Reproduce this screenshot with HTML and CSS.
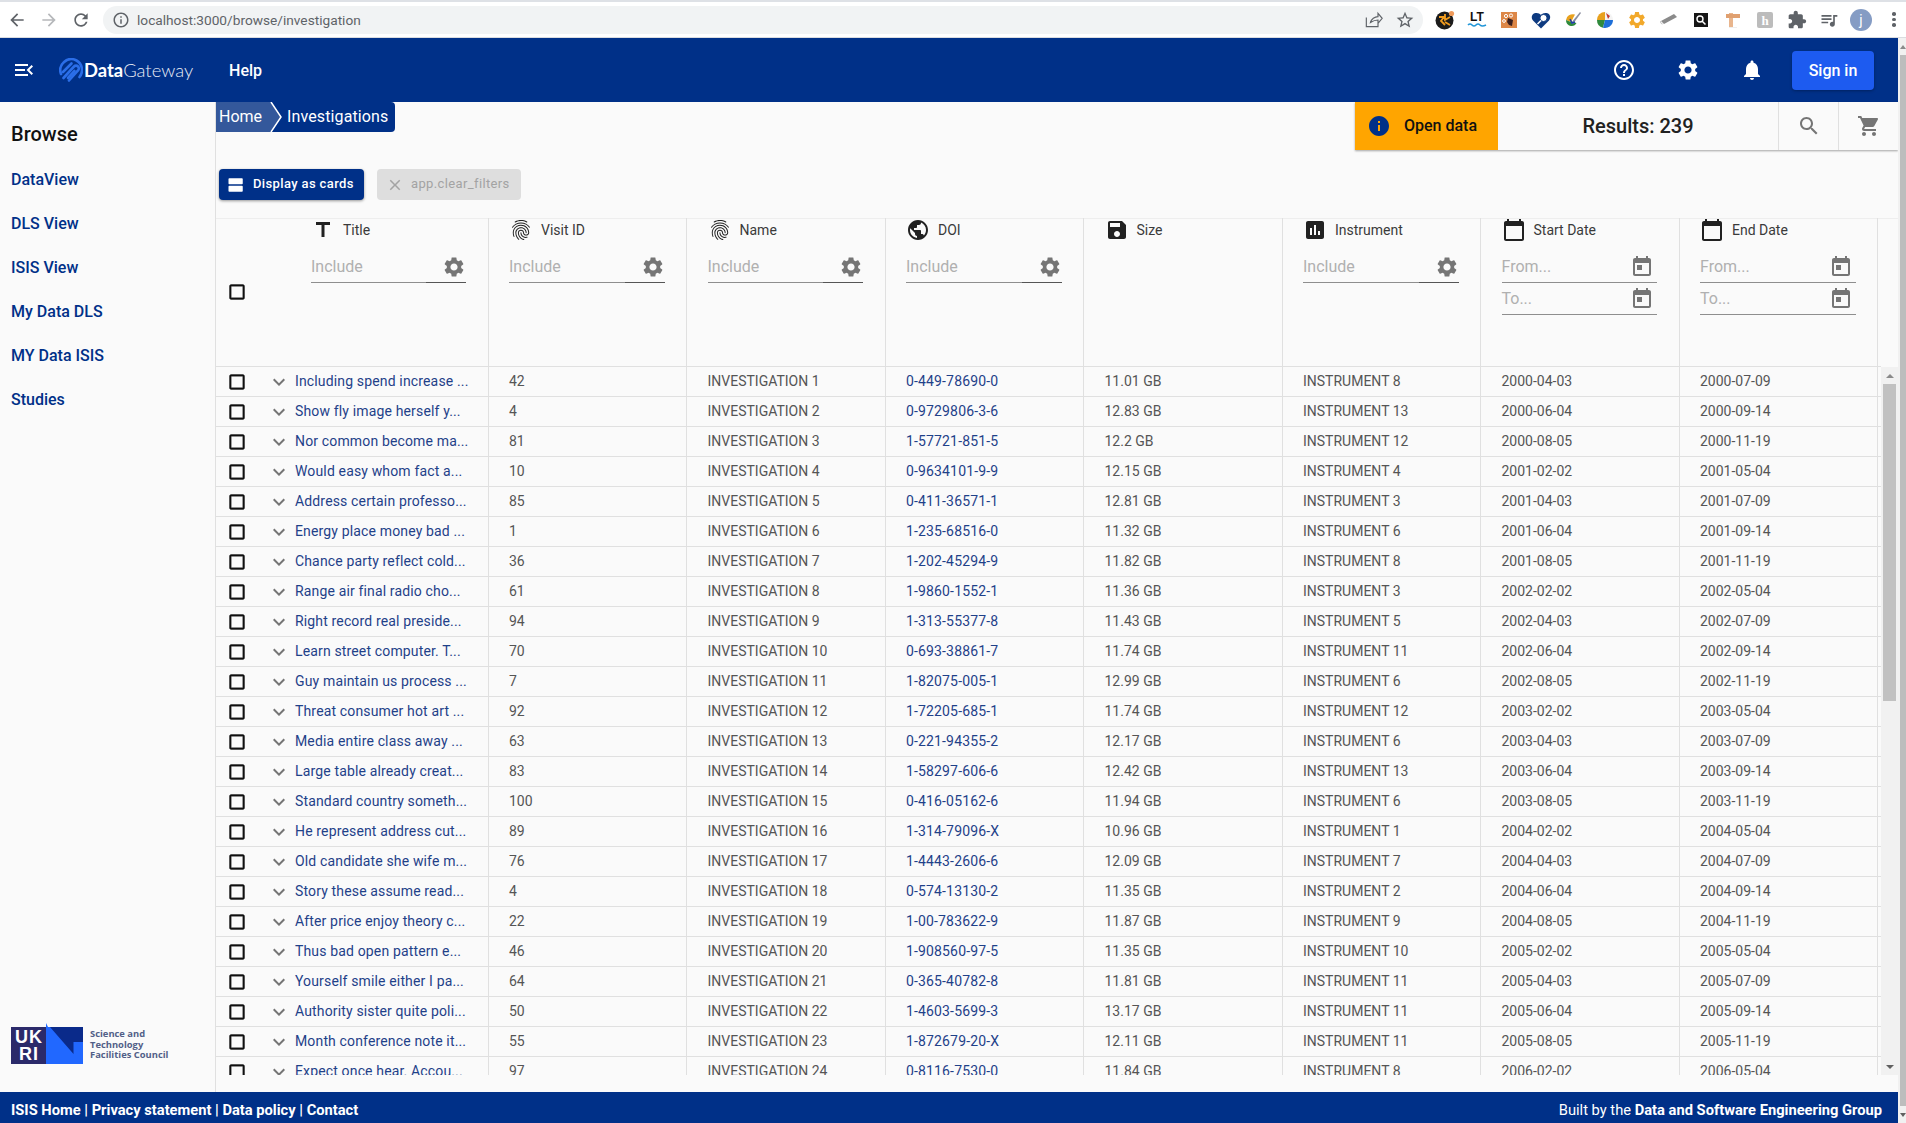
FILE: index.html
```html
<!DOCTYPE html>
<html lang="en">
<head>
<meta charset="utf-8">
<title>DataGateway - Investigations</title>
<link rel="stylesheet" href="styles.css">
</head>
<body>
<svg class="sprite" aria-hidden="true">
<defs>
<symbol id="i-menu" viewBox="0 0 24 24"><path d="M3 18h13v-2H3v2zm0-5h10v-2H3v2zm0-7v2h13V6H3zm18 9.59L17.42 12 21 8.41 19.59 7l-5 5 5 5L21 15.59z"/></symbol>
<symbol id="i-help" viewBox="0 0 24 24"><path d="M11 18h2v-2h-2v2zm1-16C6.48 2 2 6.48 2 12s4.48 10 10 10 10-4.48 10-10S17.52 2 12 2zm0 18c-4.41 0-8-3.59-8-8s3.59-8 8-8 8 3.59 8 8-3.59 8-8 8zm0-14c-2.21 0-4 1.79-4 4h2c0-1.1.9-2 2-2s2 .9 2 2c0 2-3 1.75-3 5h2c0-2.25 3-2.5 3-5 0-2.21-1.79-4-4-4z"/></symbol>
<symbol id="i-gear" viewBox="0 0 24 24"><path d="M19.14 12.94c.04-.3.06-.61.06-.94 0-.32-.02-.64-.07-.94l2.03-1.58c.18-.14.23-.41.12-.61l-1.92-3.32c-.12-.22-.37-.29-.59-.22l-2.39.96c-.5-.38-1.03-.7-1.62-.94l-.36-2.54c-.04-.24-.24-.41-.48-.41h-3.84c-.24 0-.43.17-.47.41l-.36 2.54c-.59.24-1.13.57-1.62.94l-2.39-.96c-.22-.08-.47 0-.59.22L2.74 8.87c-.12.21-.08.47.12.61l2.03 1.58c-.05.3-.09.63-.09.94s.02.64.07.94l-2.03 1.58c-.18.14-.23.41-.12.61l1.92 3.32c.12.22.37.29.59.22l2.39-.96c.5.38 1.03.7 1.62.94l.36 2.54c.05.24.24.41.48.41h3.84c.24 0 .44-.17.47-.41l.36-2.54c.59-.24 1.13-.56 1.62-.94l2.39.96c.22.08.47 0 .59-.22l1.92-3.32c.12-.22.07-.47-.12-.61l-2.01-1.58zM12 15.6c-1.98 0-3.6-1.62-3.6-3.6s1.62-3.6 3.6-3.6 3.6 1.62 3.6 3.6-1.62 3.6-3.6 3.6z"/></symbol>
<symbol id="i-bell" viewBox="0 0 24 24"><path d="M12 22c1.1 0 2-.9 2-2h-4c0 1.1.89 2 2 2zm6-6v-5c0-3.07-1.64-5.64-4.5-6.32V4c0-.83-.67-1.5-1.5-1.5s-1.5.67-1.5 1.5v.68C7.63 5.36 6 7.92 6 11v5l-2 2v1h16v-1l-2-2z"/></symbol>
<symbol id="i-search" viewBox="0 0 24 24"><path d="M15.5 14h-.79l-.28-.27C15.41 12.59 16 11.11 16 9.5 16 5.91 13.09 3 9.5 3S3 5.91 3 9.5 5.91 16 9.5 16c1.61 0 3.09-.59 4.23-1.57l.27.28v.79l5 4.99L20.49 19l-4.99-5zm-6 0C7.01 14 5 11.99 5 9.5S7.01 5 9.5 5 14 7.01 14 9.5 11.99 14 9.5 14z"/></symbol>
<symbol id="i-cart" viewBox="0 0 24 24"><path d="M7 18c-1.1 0-1.99.9-1.99 2S5.9 22 7 22s2-.9 2-2-.9-2-2-2zM1 2v2h2l3.6 7.59-1.35 2.45c-.16.28-.25.61-.25.96 0 1.1.9 2 2 2h12v-2H7.42c-.14 0-.25-.11-.25-.25l.03-.12.9-1.63h7.45c.75 0 1.41-.41 1.75-1.03l3.58-6.49c.08-.14.12-.31.12-.48 0-.55-.45-1-1-1H5.21l-.94-2H1zm16 16c-1.1 0-1.99.9-1.99 2s.89 2 1.99 2 2-.9 2-2-.9-2-2-2z"/></symbol>
<symbol id="i-info" viewBox="0 0 24 24"><path d="M12 2C6.48 2 2 6.48 2 12s4.48 10 10 10 10-4.48 10-10S17.52 2 12 2zm1 15h-2v-6h2v6zm0-8h-2V7h2v2z"/></symbol>
<symbol id="i-agenda" viewBox="0 0 24 24"><path d="M20 13H3c-.55 0-1 .45-1 1v6c0 .55.45 1 1 1h17c.55 0 1-.45 1-1v-6c0-.55-.45-1-1-1zm0-10H3c-.55 0-1 .45-1 1v6c0 .55.45 1 1 1h17c.55 0 1-.45 1-1V4c0-.55-.45-1-1-1z"/></symbol>
<symbol id="i-clear" viewBox="0 0 24 24"><path d="M19 6.41L17.59 5 12 10.59 6.41 5 5 6.41 10.59 12 5 17.59 6.41 19 12 13.41 17.59 19 19 17.59 13.41 12z"/></symbol>
<symbol id="i-title" viewBox="0 0 24 24"><path d="M5 4v3h5.5v12h3V7H19V4z"/></symbol>
<symbol id="i-finger" viewBox="0 0 24 24"><path d="M17.81 4.47c-.08 0-.16-.02-.23-.06C15.66 3.42 14 3 12.01 3c-1.98 0-3.86.47-5.57 1.41-.24.13-.54.04-.68-.2-.13-.24-.04-.55.2-.68C7.82 2.52 9.86 2 12.01 2c2.13 0 3.99.47 6.03 1.52.25.13.34.43.21.67-.09.18-.26.28-.44.28zM3.5 9.72c-.1 0-.2-.03-.29-.09-.23-.16-.28-.47-.12-.7.99-1.4 2.25-2.5 3.75-3.27C9.98 4.04 14 4.03 17.15 5.65c1.5.77 2.76 1.86 3.75 3.25.16.22.11.54-.12.7-.23.16-.54.11-.7-.12-.9-1.26-2.04-2.25-3.39-2.94-2.87-1.47-6.54-1.47-9.4.01-1.36.7-2.5 1.7-3.4 2.96-.08.14-.23.21-.39.21zm6.25 12.07c-.13 0-.26-.05-.35-.15-.87-.87-1.34-1.43-2.01-2.64-.69-1.23-1.05-2.73-1.05-4.34 0-2.97 2.54-5.39 5.66-5.39s5.66 2.42 5.66 5.39c0 .28-.22.5-.5.5s-.5-.22-.5-.5c0-2.42-2.09-4.39-4.66-4.39-2.57 0-4.66 1.97-4.66 4.39 0 1.44.32 2.77.93 3.85.64 1.15 1.08 1.64 1.85 2.42.19.2.19.51 0 .71-.11.1-.24.15-.37.15zm7.17-1.85c-1.19 0-2.24-.3-3.1-.89-1.49-1.01-2.38-2.65-2.38-4.39 0-.28.22-.5.5-.5s.5.22.5.5c0 1.41.72 2.74 1.94 3.56.71.48 1.54.71 2.54.71.24 0 .64-.03 1.04-.1.27-.05.53.13.58.41.05.27-.13.53-.41.58-.57.11-1.07.12-1.21.12zM14.91 22c-.04 0-.09-.01-.13-.02-1.59-.44-2.63-1.03-3.72-2.1-1.4-1.39-2.17-3.24-2.17-5.22 0-1.62 1.38-2.94 3.08-2.94 1.7 0 3.08 1.32 3.08 2.94 0 1.07.93 1.94 2.08 1.94s2.08-.87 2.08-1.94c0-3.77-3.25-6.83-7.25-6.83-2.84 0-5.44 1.58-6.61 4.03-.39.81-.59 1.76-.59 2.8 0 .78.07 2.01.67 3.61.1.26-.03.55-.29.64-.26.1-.55-.04-.64-.29-.49-1.31-.73-2.61-.73-3.96 0-1.2.23-2.29.68-3.24 1.33-2.79 4.28-4.6 7.51-4.6 4.55 0 8.25 3.51 8.25 7.83 0 1.62-1.38 2.94-3.08 2.94s-3.08-1.32-3.08-2.94c0-1.07-.93-1.94-2.08-1.94s-2.08.87-2.08 1.94c0 1.71.66 3.31 1.87 4.51.95.94 1.86 1.46 3.27 1.85.27.07.42.35.35.61-.05.23-.26.38-.47.38z"/></symbol>
<symbol id="i-public" viewBox="0 0 24 24"><path d="M12 2C6.48 2 2 6.48 2 12s4.48 10 10 10 10-4.48 10-10S17.52 2 12 2zm-1 17.93c-3.95-.49-7-3.85-7-7.93 0-.62.08-1.21.21-1.79L9 15v1c0 1.1.9 2 2 2v1.93zm6.9-2.54c-.26-.81-1-1.39-1.9-1.39h-1v-3c0-.55-.45-1-1-1H8v-2h2c.55 0 1-.45 1-1V7h2c1.1 0 2-.9 2-2v-.41c2.93 1.19 5 4.06 5 7.41 0 2.08-.8 3.97-2.1 5.39z"/></symbol>
<symbol id="i-save" viewBox="0 0 24 24"><path d="M17 3H5c-1.11 0-2 .9-2 2v14c0 1.1.89 2 2 2h14c1.1 0 2-.9 2-2V7l-4-4zm-5 16c-1.66 0-3-1.34-3-3s1.34-3 3-3 3 1.34 3 3-1.34 3-3 3zm3-10H5V5h10v4z"/></symbol>
<symbol id="i-assess" viewBox="0 0 24 24"><path d="M19 3H5c-1.1 0-2 .9-2 2v14c0 1.1.9 2 2 2h14c1.1 0 2-.9 2-2V5c0-1.1-.9-2-2-2zM9 17H7v-7h2v7zm4 0h-2V7h2v10zm4 0h-2v-4h2v4z"/></symbol>
<symbol id="i-today" viewBox="0 0 24 24"><path d="M19 3h-1V1h-2v2H8V1H6v2H5c-1.11 0-1.99.9-1.99 2L3 19c0 1.1.89 2 2 2h14c1.1 0 2-.9 2-2V5c0-1.1-.9-2-2-2zm0 16H5V8h14v11zM7 10h5v5H7z"/></symbol>
<symbol id="i-cal" viewBox="0 0 24 24"><path d="M20 3h-1V1h-2v2H7V1H5v2H4c-1.1 0-2 .9-2 2v16c0 1.1.9 2 2 2h16c1.1 0 2-.9 2-2V5c0-1.1-.9-2-2-2zm0 18H4V8h16v13z"/></symbol>
<symbol id="i-chev" viewBox="0 0 24 24"><path d="M16.59 8.59L12 13.17 7.41 8.59 6 10l6 6 6-6z"/></symbol>
<symbol id="i-box" viewBox="0 0 24 24"><path d="M19 5v14H5V5h14m0-2H5c-1.1 0-2 .9-2 2v14c0 1.1.9 2 2 2h14c1.1 0 2-.9 2-2V5c0-1.1-.9-2-2-2z"/></symbol>
<symbol id="i-back" viewBox="0 0 24 24"><path d="M20 11H7.83l5.59-5.59L12 4l-8 8 8 8 1.41-1.41L7.83 13H20v-2z"/></symbol>
<symbol id="i-fwd" viewBox="0 0 24 24"><path d="M12 4l-1.41 1.41L16.17 11H4v2h12.17l-5.58 5.59L12 20l8-8z"/></symbol>
<symbol id="i-reload" viewBox="0 0 24 24"><path d="M17.65 6.35C16.2 4.9 14.21 4 12 4c-4.42 0-7.99 3.58-7.99 8s3.57 8 7.99 8c3.73 0 6.84-2.55 7.73-6h-2.08c-.82 2.33-3.04 4-5.65 4-3.31 0-6-2.69-6-6s2.69-6 6-6c1.66 0 3.14.69 4.22 1.78L13 11h7V4l-2.35 2.35z"/></symbol>
<symbol id="i-infoline" viewBox="0 0 24 24"><path d="M11 7h2v2h-2zm0 4h2v6h-2zm1-9C6.48 2 2 6.48 2 12s4.48 10 10 10 10-4.48 10-10S17.52 2 12 2zm0 18c-4.41 0-8-3.59-8-8s3.59-8 8-8 8 3.59 8 8-3.59 8-8 8z"/></symbol>
<symbol id="i-star" viewBox="0 0 24 24"><path d="M22 9.24l-7.19-.62L12 2 9.19 8.63 2 9.24l5.46 4.73L5.82 21 12 17.27 18.18 21l-1.63-7.03L22 9.24zM12 15.4l-3.76 2.27 1-4.28-3.32-2.88 4.38-.38L12 6.1l1.71 4.04 4.38.38-3.32 2.88 1 4.28L12 15.4z"/></symbol>
<symbol id="i-share" viewBox="0 0 24 24"><path d="M4 9v11h14v-5M9 15c1-4 5-7 9-7V4l5 6-5 6v-4c-3 0-6 1-9 3z" fill="none" stroke="currentColor" stroke-width="1.4"/></symbol>
<symbol id="i-ext" viewBox="0 0 24 24"><path d="M20.5 11H19V7c0-1.1-.9-2-2-2h-4V3.5C13 2.12 11.88 1 10.5 1S8 2.12 8 3.5V5H4c-1.1 0-1.99.9-1.99 2v3.8H3.5c1.49 0 2.7 1.21 2.7 2.7s-1.21 2.7-2.7 2.7H2V20c0 1.1.9 2 2 2h3.8v-1.5c0-1.49 1.21-2.7 2.7-2.7 1.49 0 2.7 1.21 2.7 2.7V22H17c1.1 0 2-.9 2-2v-4h1.5c1.38 0 2.5-1.12 2.5-2.5S21.88 11 20.5 11z"/></symbol>
<symbol id="i-queue" viewBox="0 0 24 24"><path d="M15 6H3v2h12V6zm0 4H3v2h12v-2zM3 16h8v-2H3v2zM17 6v8.18c-.31-.11-.65-.18-1-.18-1.66 0-3 1.34-3 3s1.34 3 3 3 3-1.34 3-3V8h3V6h-5z"/></symbol>
</defs>
</svg>

<header class="chrome">
  <span class="slot"><svg class="ic ic-20 c-nav"><use href="#i-back"/></svg></span>
  <span class="slot"><svg class="ic ic-20 c-off"><use href="#i-fwd"/></svg></span>
  <span class="slot"><svg class="ic ic-20 c-nav"><use href="#i-reload"/></svg></span>
  <div class="omnibox">
    <svg class="ic ic-18 c-nav"><use href="#i-infoline"/></svg>
    <span class="url">localhost:3000/browse/investigation</span>
    <span class="omni-right">
      <svg class="ic ic-20 c-nav"><use href="#i-share"/></svg>
      <svg class="ic ic-20 c-nav"><use href="#i-star"/></svg>
    </span>
  </div>
  <div class="exts">
    <span class="slot"><svg class="ic ic-20" viewBox="0 0 20 20"><circle cx="9.5" cy="10.5" r="9" fill="#1c1c1c"/><path d="M4 7h5l-3 4 4 4M10 4v6l5-3M10 12l5 3" fill="none" stroke="#f29d1f" stroke-width="1.8"/><circle cx="16.5" cy="3.5" r="2.6" fill="#ef9a5a"/></svg></span>
    <span class="slot"><svg class="ic ic-20" viewBox="0 0 20 20"><text x="10" y="11" class="ext-lt">LT</text><path d="M1 15q2-2 4 0t4 0 4 0 6 0" fill="none" stroke="#2196d8" stroke-width="1.6"/></svg></span>
    <span class="slot"><svg class="ic ic-20" viewBox="0 0 20 20"><rect width="16" height="16" x="2" y="2" fill="#dd8747"/><circle cx="7" cy="6" r="1.6" fill="none" stroke="#fff"/><circle cx="12" cy="5.5" r="1.6" fill="none" stroke="#fff"/><circle cx="5" cy="11" r="1.4" fill="none" stroke="#fff"/><path d="M9 8l5 2-1 6-3-1-2-3z" fill="#3a2020"/></svg></span>
    <span class="slot"><svg class="ic ic-20" viewBox="0 0 20 20"><path d="M10 18.5 2 10.5C0 8 .5 4.5 3.500 3.300 6 2.300 8.500 3.200 10 5c1.500-1.800 4-2.700 6.500-1.700 3 1.200 3.500 4.700 1.500 7.200z" fill="#0d3a80"/><circle cx="12.500" cy="8" r="3.600" fill="#fff" stroke="#0d3a80"/><path d="M10 10.500 6.500 14" stroke="#fff" stroke-width="1.600"/></svg></span>
    <span class="slot"><svg class="ic ic-20" viewBox="0 0 20 20"><path d="M3 10a7 6 0 0 1 9-5.500L8 12z" fill="#e8a11e"/><path d="M3 10c0 4 3 6 6 6 2 0 3.500-1 4.500-3L8 12z" fill="#2f8a3c"/><path d="M8 13 17 2l1 1-8 11z" fill="#8b8fa0"/><path d="M7 9l2 4 3-1" stroke="#1e3fa8" fill="none" stroke-width="1.500"/></svg></span>
    <span class="slot"><svg class="ic ic-20" viewBox="0 0 20 20"><path d="M10 10V2a8 8 0 0 0-8 8z" fill="#e8a11e"/><path d="M10 10H2a8 8 0 0 0 6 7.800z" fill="#2f8a3c"/><path d="M10 10l-2 7.800A8 8 0 0 0 18 10z" fill="#1e6fd8"/><path d="M10 10V2a8 8 0 0 1 8 8z" fill="#f4f4f4"/><path d="M11 3l4 3-2 3z" fill="#c23a30"/></svg></span>
    <span class="slot"><svg class="ic ic-20 c-gearext"><use href="#i-gear"/></svg></span>
    <span class="slot"><svg class="ic ic-20" viewBox="0 0 20 20"><path d="M2 11l13-7 3 3-13 7z" fill="#8a8a8a"/><path d="M2 11c-1 1 0 3 1.500 3" stroke="#bbb" fill="none"/></svg></span>
    <span class="slot"><svg class="ic ic-20" viewBox="0 0 20 20"><rect x="3" y="3" width="14" height="14" fill="#161616"/><circle cx="9" cy="9" r="3" fill="none" stroke="#fff" stroke-width="1.400"/><path d="M11 11l3.500 3.500" stroke="#fff" stroke-width="1.500"/></svg></span>
    <span class="slot"><svg class="ic ic-20" viewBox="0 0 20 20"><rect x="6" y="3" width="4" height="14" fill="#e8b58d"/><rect x="3" y="4" width="14" height="4" fill="#e0a070"/><path d="M6 17h8v1H6z" fill="#eee"/></svg></span>
    <span class="slot"><svg class="ic ic-20" viewBox="0 0 20 20"><rect x="2" y="2" width="16" height="16" rx="2" fill="#bcbcbc"/><text x="10" y="14.500" class="ext-h">h</text></svg></span>
    <span class="slot"><svg class="ic ic-20 c-ext"><use href="#i-ext"/></svg></span>
    <span class="slot"><svg class="ic ic-20 c-ext"><use href="#i-queue"/></svg></span>
    <span class="slot"><span class="avatar">j</span></span>
    <span class="slot more"><span class="dots"><i></i><i></i><i></i></span></span>
  </div>
</header>

<div class="workspace">
  <div class="app">
    <nav class="appbar">
      <svg class="ic ic-24 menu-ic"><use href="#i-menu"/></svg>
      <svg class="dg-mark" viewBox="0 0 24 24"><g fill="none" stroke="#2b6ee8" stroke-width="2.600" stroke-linecap="round"><path d="M2 16A11 11 0 0 1 17.500 2.500 11 11 0 0 1 20.500 19"/><path d="M4.500 20 15 8.500a2.800 2.800 0 0 1 4 4L10 22.500"/><path d="M4 14 12.500 5.500"/><path d="M9 20l6.500-7"/></g></svg>
      <span class="dg-word"><b>Data</b>Gateway</span>
      <span class="appbar-help">Help</span>
      <span class="appbar-right">
        <span class="appbar-icons">
          <svg class="ic ic-24 c-white"><use href="#i-help"/></svg>
          <svg class="ic ic-24 c-white"><use href="#i-gear"/></svg>
          <svg class="ic ic-24 c-white"><use href="#i-bell"/></svg>
        </span>
        <span class="signin">Sign in</span>
      </span>
    </nav>

    <div class="main">
      <aside class="sidebar">
        <div class="side-nav">
          <h2 class="side-title">Browse</h2>
          <a class="side-link">DataView</a>
          <a class="side-link">DLS View</a>
          <a class="side-link">ISIS View</a>
          <a class="side-link">My Data DLS</a>
          <a class="side-link">MY Data ISIS</a>
          <a class="side-link">Studies</a>
        </div>
        <div class="stfc">
          <svg class="ukri" viewBox="0 0 72 41">
            <rect x="0" y="4" width="36" height="37" fill="#2b2a6a"/>
            <path d="M35 0V41H72V4H37z" fill="#2168ff"/>
            <path d="M39 4H72V19H62.500V31z" fill="#0a2a8a"/>
            <text x="18" y="20" class="ukri-t">UK</text>
            <text x="18" y="37" class="ukri-t">RI</text>
          </svg>
          <span class="stfc-text">Science and<br>Technology<br>Facilities Council</span>
        </div>
      </aside>

      <section class="content">
        <div class="toprow">
          <div class="crumbs">
            <span class="crumb-home">Home</span>
            <svg class="crumb-sep" viewBox="0 0 14 30"><path d="M0 0H3L13 15 3 30H0z" fill="#34589b"/><path d="M3 0H14V30H3L13 15z" fill="#003088"/><path d="M3 0 13 15 3 30" fill="none" stroke="#fff" stroke-width="1.500"/></svg>
            <span class="crumb-last">Investigations</span>
          </div>
          <div class="resultbar">
            <div class="opendata"><svg class="ic ic-24 c-navy"><use href="#i-info"/></svg><span>Open data</span></div>
            <div class="results">Results: 239</div>
            <div class="rb-btn"><svg class="ic ic-24 c-grey"><use href="#i-search"/></svg></div>
            <div class="rb-btn"><svg class="ic ic-24 c-grey"><use href="#i-cart"/></svg></div>
          </div>
        </div>

        <div class="toolbar">
          <span class="btn btn-primary"><svg class="ic ic-18 c-white"><use href="#i-agenda"/></svg><span class="btn-label">Display as cards</span></span>
          <span class="btn btn-off"><svg class="ic ic-18 c-offbtn"><use href="#i-clear"/></svg><span class="btn-label">app.clear_filters</span></span>
        </div>

        <div class="table">
          <div class="head grid">
            <div class="hcell hcell-first">
              <span class="hsel"><svg class="ic ic-20 c-box"><use href="#i-box"/></svg></span>
              <div class="hbody">
                <div class="hlabel"><svg class="ic ic-24 c-dark"><use href="#i-title"/></svg>Title</div>
                <div class="filter"><span class="ph">Include</span><span class="fbtn"><svg class="ic ic-24 c-grey"><use href="#i-gear"/></svg></span></div>
              </div>
            </div>
            <div class="hcell">
              <div class="hlabel"><svg class="ic ic-24 c-dark"><use href="#i-finger"/></svg>Visit ID</div>
              <div class="filter"><span class="ph">Include</span><span class="fbtn"><svg class="ic ic-24 c-grey"><use href="#i-gear"/></svg></span></div>
            </div>
            <div class="hcell">
              <div class="hlabel"><svg class="ic ic-24 c-dark"><use href="#i-finger"/></svg>Name</div>
              <div class="filter"><span class="ph">Include</span><span class="fbtn"><svg class="ic ic-24 c-grey"><use href="#i-gear"/></svg></span></div>
            </div>
            <div class="hcell">
              <div class="hlabel"><svg class="ic ic-24 c-dark"><use href="#i-public"/></svg>DOI</div>
              <div class="filter"><span class="ph">Include</span><span class="fbtn"><svg class="ic ic-24 c-grey"><use href="#i-gear"/></svg></span></div>
            </div>
            <div class="hcell">
              <div class="hlabel"><svg class="ic ic-24 c-dark"><use href="#i-save"/></svg>Size</div>
            </div>
            <div class="hcell">
              <div class="hlabel"><svg class="ic ic-24 c-dark"><use href="#i-assess"/></svg>Instrument</div>
              <div class="filter"><span class="ph">Include</span><span class="fbtn"><svg class="ic ic-24 c-grey"><use href="#i-gear"/></svg></span></div>
            </div>
            <div class="hcell">
              <div class="hlabel"><svg class="ic ic-24 c-dark"><use href="#i-cal"/></svg>Start Date</div>
              <div class="filter filter-date"><span class="ph">From...</span><svg class="ic ic-24 c-grey"><use href="#i-today"/></svg></div>
              <div class="filter filter-date filter-next"><span class="ph">To...</span><svg class="ic ic-24 c-grey"><use href="#i-today"/></svg></div>
            </div>
            <div class="hcell">
              <div class="hlabel"><svg class="ic ic-24 c-dark"><use href="#i-cal"/></svg>End Date</div>
              <div class="filter filter-date"><span class="ph">From...</span><svg class="ic ic-24 c-grey"><use href="#i-today"/></svg></div>
              <div class="filter filter-date filter-next"><span class="ph">To...</span><svg class="ic ic-24 c-grey"><use href="#i-today"/></svg></div>
            </div>
          </div>

          <div class="tbody">
            <div class="rows">
              <div class="row grid"><div class="cell cell-first"><svg class="ic ic-20 c-box"><use href="#i-box"/></svg><svg class="ic ic-24 c-chev"><use href="#i-chev"/></svg><a class="lnk">Including spend increase ...</a></div><div class="cell">42</div><div class="cell">INVESTIGATION 1</div><div class="cell"><a class="lnk">0-449-78690-0</a></div><div class="cell">11.01 GB</div><div class="cell">INSTRUMENT 8</div><div class="cell">2000-04-03</div><div class="cell">2000-07-09</div></div>
              <div class="row grid"><div class="cell cell-first"><svg class="ic ic-20 c-box"><use href="#i-box"/></svg><svg class="ic ic-24 c-chev"><use href="#i-chev"/></svg><a class="lnk">Show fly image herself y...</a></div><div class="cell">4</div><div class="cell">INVESTIGATION 2</div><div class="cell"><a class="lnk">0-9729806-3-6</a></div><div class="cell">12.83 GB</div><div class="cell">INSTRUMENT 13</div><div class="cell">2000-06-04</div><div class="cell">2000-09-14</div></div>
              <div class="row grid"><div class="cell cell-first"><svg class="ic ic-20 c-box"><use href="#i-box"/></svg><svg class="ic ic-24 c-chev"><use href="#i-chev"/></svg><a class="lnk">Nor common become ma...</a></div><div class="cell">81</div><div class="cell">INVESTIGATION 3</div><div class="cell"><a class="lnk">1-57721-851-5</a></div><div class="cell">12.2 GB</div><div class="cell">INSTRUMENT 12</div><div class="cell">2000-08-05</div><div class="cell">2000-11-19</div></div>
              <div class="row grid"><div class="cell cell-first"><svg class="ic ic-20 c-box"><use href="#i-box"/></svg><svg class="ic ic-24 c-chev"><use href="#i-chev"/></svg><a class="lnk">Would easy whom fact a...</a></div><div class="cell">10</div><div class="cell">INVESTIGATION 4</div><div class="cell"><a class="lnk">0-9634101-9-9</a></div><div class="cell">12.15 GB</div><div class="cell">INSTRUMENT 4</div><div class="cell">2001-02-02</div><div class="cell">2001-05-04</div></div>
              <div class="row grid"><div class="cell cell-first"><svg class="ic ic-20 c-box"><use href="#i-box"/></svg><svg class="ic ic-24 c-chev"><use href="#i-chev"/></svg><a class="lnk">Address certain professo...</a></div><div class="cell">85</div><div class="cell">INVESTIGATION 5</div><div class="cell"><a class="lnk">0-411-36571-1</a></div><div class="cell">12.81 GB</div><div class="cell">INSTRUMENT 3</div><div class="cell">2001-04-03</div><div class="cell">2001-07-09</div></div>
              <div class="row grid"><div class="cell cell-first"><svg class="ic ic-20 c-box"><use href="#i-box"/></svg><svg class="ic ic-24 c-chev"><use href="#i-chev"/></svg><a class="lnk">Energy place money bad ...</a></div><div class="cell">1</div><div class="cell">INVESTIGATION 6</div><div class="cell"><a class="lnk">1-235-68516-0</a></div><div class="cell">11.32 GB</div><div class="cell">INSTRUMENT 6</div><div class="cell">2001-06-04</div><div class="cell">2001-09-14</div></div>
              <div class="row grid"><div class="cell cell-first"><svg class="ic ic-20 c-box"><use href="#i-box"/></svg><svg class="ic ic-24 c-chev"><use href="#i-chev"/></svg><a class="lnk">Chance party reflect cold...</a></div><div class="cell">36</div><div class="cell">INVESTIGATION 7</div><div class="cell"><a class="lnk">1-202-45294-9</a></div><div class="cell">11.82 GB</div><div class="cell">INSTRUMENT 8</div><div class="cell">2001-08-05</div><div class="cell">2001-11-19</div></div>
              <div class="row grid"><div class="cell cell-first"><svg class="ic ic-20 c-box"><use href="#i-box"/></svg><svg class="ic ic-24 c-chev"><use href="#i-chev"/></svg><a class="lnk">Range air final radio cho...</a></div><div class="cell">61</div><div class="cell">INVESTIGATION 8</div><div class="cell"><a class="lnk">1-9860-1552-1</a></div><div class="cell">11.36 GB</div><div class="cell">INSTRUMENT 3</div><div class="cell">2002-02-02</div><div class="cell">2002-05-04</div></div>
              <div class="row grid"><div class="cell cell-first"><svg class="ic ic-20 c-box"><use href="#i-box"/></svg><svg class="ic ic-24 c-chev"><use href="#i-chev"/></svg><a class="lnk">Right record real preside...</a></div><div class="cell">94</div><div class="cell">INVESTIGATION 9</div><div class="cell"><a class="lnk">1-313-55377-8</a></div><div class="cell">11.43 GB</div><div class="cell">INSTRUMENT 5</div><div class="cell">2002-04-03</div><div class="cell">2002-07-09</div></div>
              <div class="row grid"><div class="cell cell-first"><svg class="ic ic-20 c-box"><use href="#i-box"/></svg><svg class="ic ic-24 c-chev"><use href="#i-chev"/></svg><a class="lnk">Learn street computer. T...</a></div><div class="cell">70</div><div class="cell">INVESTIGATION 10</div><div class="cell"><a class="lnk">0-693-38861-7</a></div><div class="cell">11.74 GB</div><div class="cell">INSTRUMENT 11</div><div class="cell">2002-06-04</div><div class="cell">2002-09-14</div></div>
              <div class="row grid"><div class="cell cell-first"><svg class="ic ic-20 c-box"><use href="#i-box"/></svg><svg class="ic ic-24 c-chev"><use href="#i-chev"/></svg><a class="lnk">Guy maintain us process ...</a></div><div class="cell">7</div><div class="cell">INVESTIGATION 11</div><div class="cell"><a class="lnk">1-82075-005-1</a></div><div class="cell">12.99 GB</div><div class="cell">INSTRUMENT 6</div><div class="cell">2002-08-05</div><div class="cell">2002-11-19</div></div>
              <div class="row grid"><div class="cell cell-first"><svg class="ic ic-20 c-box"><use href="#i-box"/></svg><svg class="ic ic-24 c-chev"><use href="#i-chev"/></svg><a class="lnk">Threat consumer hot art ...</a></div><div class="cell">92</div><div class="cell">INVESTIGATION 12</div><div class="cell"><a class="lnk">1-72205-685-1</a></div><div class="cell">11.74 GB</div><div class="cell">INSTRUMENT 12</div><div class="cell">2003-02-02</div><div class="cell">2003-05-04</div></div>
              <div class="row grid"><div class="cell cell-first"><svg class="ic ic-20 c-box"><use href="#i-box"/></svg><svg class="ic ic-24 c-chev"><use href="#i-chev"/></svg><a class="lnk">Media entire class away ...</a></div><div class="cell">63</div><div class="cell">INVESTIGATION 13</div><div class="cell"><a class="lnk">0-221-94355-2</a></div><div class="cell">12.17 GB</div><div class="cell">INSTRUMENT 6</div><div class="cell">2003-04-03</div><div class="cell">2003-07-09</div></div>
              <div class="row grid"><div class="cell cell-first"><svg class="ic ic-20 c-box"><use href="#i-box"/></svg><svg class="ic ic-24 c-chev"><use href="#i-chev"/></svg><a class="lnk">Large table already creat...</a></div><div class="cell">83</div><div class="cell">INVESTIGATION 14</div><div class="cell"><a class="lnk">1-58297-606-6</a></div><div class="cell">12.42 GB</div><div class="cell">INSTRUMENT 13</div><div class="cell">2003-06-04</div><div class="cell">2003-09-14</div></div>
              <div class="row grid"><div class="cell cell-first"><svg class="ic ic-20 c-box"><use href="#i-box"/></svg><svg class="ic ic-24 c-chev"><use href="#i-chev"/></svg><a class="lnk">Standard country someth...</a></div><div class="cell">100</div><div class="cell">INVESTIGATION 15</div><div class="cell"><a class="lnk">0-416-05162-6</a></div><div class="cell">11.94 GB</div><div class="cell">INSTRUMENT 6</div><div class="cell">2003-08-05</div><div class="cell">2003-11-19</div></div>
              <div class="row grid"><div class="cell cell-first"><svg class="ic ic-20 c-box"><use href="#i-box"/></svg><svg class="ic ic-24 c-chev"><use href="#i-chev"/></svg><a class="lnk">He represent address cut...</a></div><div class="cell">89</div><div class="cell">INVESTIGATION 16</div><div class="cell"><a class="lnk">1-314-79096-X</a></div><div class="cell">10.96 GB</div><div class="cell">INSTRUMENT 1</div><div class="cell">2004-02-02</div><div class="cell">2004-05-04</div></div>
              <div class="row grid"><div class="cell cell-first"><svg class="ic ic-20 c-box"><use href="#i-box"/></svg><svg class="ic ic-24 c-chev"><use href="#i-chev"/></svg><a class="lnk">Old candidate she wife m...</a></div><div class="cell">76</div><div class="cell">INVESTIGATION 17</div><div class="cell"><a class="lnk">1-4443-2606-6</a></div><div class="cell">12.09 GB</div><div class="cell">INSTRUMENT 7</div><div class="cell">2004-04-03</div><div class="cell">2004-07-09</div></div>
              <div class="row grid"><div class="cell cell-first"><svg class="ic ic-20 c-box"><use href="#i-box"/></svg><svg class="ic ic-24 c-chev"><use href="#i-chev"/></svg><a class="lnk">Story these assume read...</a></div><div class="cell">4</div><div class="cell">INVESTIGATION 18</div><div class="cell"><a class="lnk">0-574-13130-2</a></div><div class="cell">11.35 GB</div><div class="cell">INSTRUMENT 2</div><div class="cell">2004-06-04</div><div class="cell">2004-09-14</div></div>
              <div class="row grid"><div class="cell cell-first"><svg class="ic ic-20 c-box"><use href="#i-box"/></svg><svg class="ic ic-24 c-chev"><use href="#i-chev"/></svg><a class="lnk">After price enjoy theory c...</a></div><div class="cell">22</div><div class="cell">INVESTIGATION 19</div><div class="cell"><a class="lnk">1-00-783622-9</a></div><div class="cell">11.87 GB</div><div class="cell">INSTRUMENT 9</div><div class="cell">2004-08-05</div><div class="cell">2004-11-19</div></div>
              <div class="row grid"><div class="cell cell-first"><svg class="ic ic-20 c-box"><use href="#i-box"/></svg><svg class="ic ic-24 c-chev"><use href="#i-chev"/></svg><a class="lnk">Thus bad open pattern e...</a></div><div class="cell">46</div><div class="cell">INVESTIGATION 20</div><div class="cell"><a class="lnk">1-908560-97-5</a></div><div class="cell">11.35 GB</div><div class="cell">INSTRUMENT 10</div><div class="cell">2005-02-02</div><div class="cell">2005-05-04</div></div>
              <div class="row grid"><div class="cell cell-first"><svg class="ic ic-20 c-box"><use href="#i-box"/></svg><svg class="ic ic-24 c-chev"><use href="#i-chev"/></svg><a class="lnk">Yourself smile either I pa...</a></div><div class="cell">64</div><div class="cell">INVESTIGATION 21</div><div class="cell"><a class="lnk">0-365-40782-8</a></div><div class="cell">11.81 GB</div><div class="cell">INSTRUMENT 11</div><div class="cell">2005-04-03</div><div class="cell">2005-07-09</div></div>
              <div class="row grid"><div class="cell cell-first"><svg class="ic ic-20 c-box"><use href="#i-box"/></svg><svg class="ic ic-24 c-chev"><use href="#i-chev"/></svg><a class="lnk">Authority sister quite poli...</a></div><div class="cell">50</div><div class="cell">INVESTIGATION 22</div><div class="cell"><a class="lnk">1-4603-5699-3</a></div><div class="cell">13.17 GB</div><div class="cell">INSTRUMENT 11</div><div class="cell">2005-06-04</div><div class="cell">2005-09-14</div></div>
              <div class="row grid"><div class="cell cell-first"><svg class="ic ic-20 c-box"><use href="#i-box"/></svg><svg class="ic ic-24 c-chev"><use href="#i-chev"/></svg><a class="lnk">Month conference note it...</a></div><div class="cell">55</div><div class="cell">INVESTIGATION 23</div><div class="cell"><a class="lnk">1-872679-20-X</a></div><div class="cell">12.11 GB</div><div class="cell">INSTRUMENT 11</div><div class="cell">2005-08-05</div><div class="cell">2005-11-19</div></div>
              <div class="row grid"><div class="cell cell-first"><svg class="ic ic-20 c-box"><use href="#i-box"/></svg><svg class="ic ic-24 c-chev"><use href="#i-chev"/></svg><a class="lnk">Expect once hear. Accou...</a></div><div class="cell">97</div><div class="cell">INVESTIGATION 24</div><div class="cell"><a class="lnk">0-8116-7530-0</a></div><div class="cell">11.84 GB</div><div class="cell">INSTRUMENT 8</div><div class="cell">2006-02-02</div><div class="cell">2006-05-04</div></div>
            </div>
            <div class="track">
              <span class="arrow-box"><i class="tri-up"></i></span>
              <span class="track-thumb"></span>
              <span class="track-gap"></span>
              <span class="arrow-box"><i class="tri-down"></i></span>
            </div>
          </div>
        </div>
      </section>
    </div>

    <footer class="footer">
      <span class="foot-left">ISIS Home | Privacy statement | Data policy | Contact</span>
      <span class="foot-right">Built by the <b>Data and Software Engineering Group</b></span>
    </footer>
  </div>
  <div class="pagebar">
    <span class="pagebar-end"><i class="tri-up tri-small"></i></span>
    <span class="pagebar-thumb"></span>
    <span class="pagebar-end"><i class="tri-down tri-small"></i></span>
  </div>
</div>
</body>
</html>
```

FILE: styles.css
```css
* { box-sizing: border-box; }
html, body { margin: 0; padding: 0; }
body {
  width: 1906px;
  height: 1123px;
  overflow: hidden;
  background: #fafafa;
  font-family: Roboto, "Liberation Sans", sans-serif;
  font-size: 14px;
  color: #424242;
  display: flex;
  flex-direction: column;
}
.sprite { width: 0; height: 0; position: absolute; }
.ic { flex: none; display: block; fill: currentColor; }
.ic-18 { width: 18px; height: 18px; }
.ic-20 { width: 20px; height: 20px; }
.ic-24 { width: 24px; height: 24px; }
.c-white { color: #fff; }
.c-nav { color: #5f6368; }
.c-off { color: #b6b8bb; }
.c-ext { color: #5f6368; }
.c-gearext { color: #f2a92b; }
.c-navy { color: #003088; }
.c-grey { color: #757575; }
.c-dark { color: #212121; }
.c-box { color: #111; stroke: currentColor; stroke-width: .5px; }
.c-chev { color: #757575; }
.c-offbtn { color: #a3a3a3; }

/* browser chrome */
.chrome {
  height: 38px;
  flex: none;
  display: flex;
  align-items: center;
  padding-left: 1px;
  background: #fff;
  border-top: 2px solid #dee1e6;
  border-bottom: 1px solid #dadce0;
}
.slot { width: 32px; height: 32px; flex: none; display: flex; align-items: center; justify-content: center; }
.omnibox {
  width: 1320px;
  height: 28px;
  margin-left: 6px;
  flex: none;
  background: #f1f3f4;
  border-radius: 14px;
  display: flex;
  align-items: center;
  padding: 0 8px 0 9px;
}
.url { margin-left: 7px; font-size: 13.700px; color: #5f6368; }
.omni-right { margin-left: auto; display: flex; gap: 12px; }
.exts { display: flex; margin-left: 6px; }
.more { width: 29px; justify-content: flex-start; padding-left: 15px; }
.ext-lt { font: 700 12px "Liberation Sans", sans-serif; text-anchor: middle; fill: #111; }
.ext-h { font: 700 13px "Liberation Serif", serif; text-anchor: middle; fill: #fff; }
.avatar {
  width: 22px; height: 22px; border-radius: 50%;
  background: #859cc4; color: #fff;
  display: flex; align-items: center; justify-content: center;
  font-size: 14px;
}
.dots { display: flex; flex-direction: column; gap: 2px; }
.dots i { width: 3.500px; height: 3.500px; border-radius: 50%; background: #5f6368; display: block; }

/* page frame */
.workspace { flex: 1; display: flex; min-height: 0; }
.app { width: 1898px; flex: none; display: flex; flex-direction: column; }
.pagebar { width: 8px; flex: none; background: #f1f1f1; display: flex; flex-direction: column; padding-left: 2px; }
.pagebar-end { height: 17px; flex: none; display: flex; align-items: center; justify-content: center; }
.pagebar-thumb { flex: 1; background: #bdbdbd; }

/* app bar */
.appbar {
  height: 64px;
  flex: none;
  background: #003088;
  color: #fff;
  display: flex;
  align-items: center;
  padding-left: 12px;
}
.menu-ic { color: #fff; }
.dg-mark { width: 24px; height: 24px; margin-left: 23px; flex: none; }
.dg-word { margin-left: 1px; font: 300 18.400px Lato, Inter, sans-serif; color: #e8ecf5; }
.dg-word b { font-weight: 700; color: #fff; }
.appbar-help { margin-left: 36px; font-size: 16px; font-weight: 500; }
.appbar-right { margin-left: auto; margin-right: 24px; display: flex; align-items: center; gap: 28px; }
.appbar-icons { display: flex; gap: 40px; }
.signin {
  width: 82px; height: 39px;
  background: #1d5bf0;
  border-radius: 4px;
  display: flex; align-items: center; justify-content: center;
  font-size: 16px; font-weight: 500;
  box-shadow: 0 1px 3px rgba(0,0,0,.3);
}

/* main */
.main { flex: 1; display: flex; min-height: 0; }
.sidebar {
  width: 216px;
  flex: none;
  border-right: 1px solid #e0e0e0;
  padding: 20px 0 28px 11px;
  display: flex;
  flex-direction: column;
  justify-content: space-between;
}
.side-nav { display: flex; flex-direction: column; }
.side-title { margin: 0; height: 26px; line-height: 24px; font-size: 20px; font-weight: 500; color: #111; }
.side-link { height: 44px; display: flex; align-items: center; font-size: 16px; font-weight: 500; color: #003088; }
.side-title + .side-link { margin-top: 9.500px; }
.stfc { display: flex; align-items: flex-start; }
.ukri { width: 72px; height: 41px; flex: none; }
.ukri-t { font: 900 18px "Liberation Sans", sans-serif; text-anchor: middle; fill: #fff; letter-spacing: 1px; }
.stfc-text { margin: 6px 0 0 7px; font: 700 9.400px/10.500px "Open Sans", sans-serif; color: #525f88; white-space: nowrap; }

.content { flex: 1; min-width: 0; display: flex; flex-direction: column; }
.toprow { height: 67px; flex: none; display: flex; justify-content: space-between; align-items: flex-start; }
.crumbs { display: flex; height: 30px; color: #fff; font-size: 16px; line-height: 29px; }
.crumb-home { width: 52px; padding-left: 3px; background: #34589b; }
.crumb-sep { width: 14px; height: 30px; flex: none; display: block; }
.crumb-last { padding: 0 5px; background: #003088; border-radius: 0 4px 4px 0; width: 113px; letter-spacing: .12px; white-space: nowrap; }

.resultbar {
  display: flex;
  height: 48px;
  box-shadow: 0 1px 2px rgba(0,0,0,.35);
}
.opendata {
  width: 143px;
  background: #ffa500;
  display: flex;
  align-items: center;
  gap: 13px;
  padding-left: 12px;
  font-size: 16px;
  font-weight: 500;
  color: #111;
}
.opendata span { margin-bottom: 2px; }
.results {
  width: 280px;
  display: flex; align-items: center; justify-content: center;
  font-size: 20px; font-weight: 500; color: #212121;
}
.rb-btn {
  width: 60px;
  border-left: 1px solid #e0e0e0;
  display: flex; align-items: center; justify-content: center;
}
.toolbar { height: 31px; flex: none; display: flex; gap: 13px; padding-left: 3px; }
.btn {
  height: 31px;
  border-radius: 4px;
  display: flex; align-items: center;
  font-size: 13px; font-weight: 500; letter-spacing: .37px;
}
.btn-label { margin-bottom: 2px; }
.btn-primary { width: 145px; padding-left: 8px; gap: 8px; background: #003088; color: #fff; box-shadow: 0 1px 3px rgba(0,0,0,.4); }
.btn-off { width: 144px; padding-left: 9px; gap: 7px; background: #dedede; color: #a3a3a3; font-weight: 400; }

/* table */
.table { height: 857px; margin-top: 18px; flex: none; display: flex; flex-direction: column; box-shadow: inset 0 1px 0 #eee; }
.grid { display: grid; grid-template-columns: 272.5px repeat(7, 198.5px); }
.head { height: 149px; flex: none; width: 1665px; border-bottom: 1px solid #e0e0e0; }
.hcell { border-right: 1px solid #e0e0e0; padding-left: 20.500px; padding-right: 21.500px; min-width: 0; }
.hcell-first { padding: 0; display: flex; align-items: stretch; }
.hsel { width: 95px; flex: none; padding-left: 11px; display: flex; align-items: center; }
.hbody { flex: 1; padding-right: 22px; min-width: 0; }
.hlabel { height: 24px; display: flex; align-items: center; gap: 8px; font-size: 14px; color: #3a3a3a; }
.filter {
  height: 32px;
  margin-top: 9px;
  border-bottom: 1px solid #8e8e8e;
  display: flex;
  align-items: center;
  justify-content: space-between;
}
.filter-next { margin-top: 0; }
.filter-date .ic { margin-right: 3px; }
.ph { font-size: 16px; color: #b0b0b0; }
.fbtn {
  width: 40px;
  height: 32px;
  margin-bottom: -1px;
  border-bottom: 1px solid #555;
  display: flex;
  align-items: center;
  justify-content: flex-end;
}

.tbody { flex: 1; min-height: 0; display: flex; }
.rows { width: 1665px; flex: none; overflow: hidden; }
.row { height: 30px; border-bottom: 1px solid #e0e0e0; }
.cell {
  border-right: 1px solid #e0e0e0;
  padding-left: 20.500px;
  padding-bottom: 2px;
  display: flex;
  align-items: center;
  font-size: 14px;
  color: #555;
  white-space: nowrap;
  min-width: 0;
}
.cell-first { padding-left: 11px; padding-bottom: 0; }
.cell-first .c-chev { margin-left: 20px; margin-right: 4px; }
.cell-first .lnk { margin-bottom: 2px; }
.lnk { color: #1f4189; letter-spacing: .15px; }

.track { width: 17px; flex: none; background: #f1f1f1; display: flex; flex-direction: column; }
.arrow-box { height: 17px; flex: none; display: flex; align-items: center; justify-content: center; }
.track-thumb { height: 317px; flex: none; margin: 0 2px; background: #c1c1c1; }
.track-gap { flex: 1; }
.tri-up, .tri-down { display: block; width: 0; height: 0; border-left: 4px solid transparent; border-right: 4px solid transparent; }
.tri-up { border-bottom: 4px solid #8a8a8a; }
.tri-down { border-top: 4px solid #606060; }
.tri-small { border-left-width: 3px; border-right-width: 3px; }

/* footer */
.footer {
  height: 31px;
  flex: none;
  background: #003088;
  color: #fff;
  display: flex;
  justify-content: space-between;
  align-items: center;
  padding: 5px 16px 0 11px;
}
.foot-left { font-size: 14.700px; font-weight: 700; }
.foot-right { font-size: 14.700px; }
.foot-right b { font-weight: 700; }
```
